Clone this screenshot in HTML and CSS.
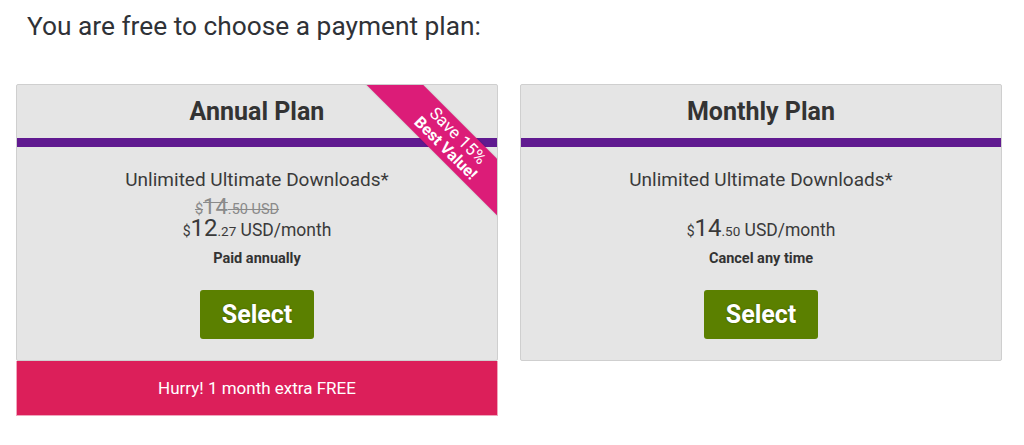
FILE: index.html
```html
<!DOCTYPE html>
<html lang="en">
<head>
<meta charset="utf-8">
<title>Payment plans</title>
<link rel="stylesheet" href="styles.css">
</head>
<body>
<h1 class="intro">You are free to choose a payment plan:</h1>
<div class="plans">
  <div class="plan-col">
    <div class="card">
      <div class="card-head">Annual Plan</div>
      <div class="card-body">
        <div class="feature">Unlimited Ultimate Downloads*</div>
        <div class="old-price"><span class="cur">$</span><span class="big">14</span>.50 USD</div>
        <div class="price"><span class="cur">$</span><span class="big">12</span><span class="cents">.27</span> USD/month</div>
        <div class="note">Paid annually</div>
        <a class="btn" href="#">Select</a>
      </div>
      <div class="ribbon"><span>Save 15%</span><b>Best Value!</b></div>
    </div>
    <div class="promo">Hurry! 1 month extra FREE</div>
  </div>
  <div class="plan-col">
    <div class="card">
      <div class="card-head">Monthly Plan</div>
      <div class="card-body">
        <div class="feature">Unlimited Ultimate Downloads*</div>
        <div class="old-price hidden">&nbsp;</div>
        <div class="price"><span class="cur">$</span><span class="big">14</span><span class="cents">.50</span> USD/month</div>
        <div class="note">Cancel any time</div>
        <a class="btn" href="#">Select</a>
      </div>
    </div>
  </div>
</div>
</body>
</html>
```
FILE: styles.css
```css
* { box-sizing: border-box; }
html, body { margin: 0; padding: 0; background: #fff; }
body {
  font-family: Roboto, "Liberation Sans", Arial, sans-serif;
  color: #333;
}
.intro {
  margin: 0;
  padding: 11px 0 0 27px;
  font-size: 26.3px;
  line-height: 30px;
  font-weight: 400;
  color: #2f3237;
}
.plans {
  display: flex;
  gap: 22px;
  padding: 43px 0 0 16px;
}
.plan-col { width: 482px; }
.card {
  position: relative;
  overflow: hidden;
  background: #e5e5e5;
  border: 1px solid #cfcfcf;
  border-radius: 2px;
}
.card-head {
  height: 62px;
  display: flex;
  align-items: center;
  justify-content: center;
  font-size: 25px;
  font-weight: 700;
  color: #333;
  border-bottom: 9px solid #601a90;
}
.card-body {
  display: flex;
  flex-direction: column;
  align-items: center;
  padding: 22px 0 21px;
}
.feature {
  font-size: 19px;
  line-height: 22px;
  color: #3a3a3a;
}
.old-price {
  margin-top: 6px;
  margin-right: 40px;
  height: 20px;
  line-height: 20px;
  font-size: 14.5px;
  color: #8a8a8a;
  text-decoration: line-through;
}
.old-price .big { font-size: 22px; }
.old-price.hidden { visibility: hidden; }
.price {
  height: 22px;
  line-height: 22px;
  font-size: 17.5px;
  color: #3a3a3a;
}
.price .cur { font-size: 14px; }
.price .big { font-size: 24px; }
.price .cents { font-size: 13.5px; }
.note {
  margin-top: 11px;
  font-size: 14.5px;
  line-height: 18px;
  font-weight: 700;
  color: #333;
}
.btn {
  margin-top: 22px;
  width: 114px;
  height: 49px;
  display: flex;
  align-items: center;
  justify-content: center;
  background: #5b8000;
  border-radius: 3px;
  color: #fff;
  font-size: 25px;
  font-weight: 700;
  text-decoration: none;
  text-shadow: 0 0 2px rgba(0,0,0,0.35);
}
.ribbon {
  position: absolute;
  left: 332px;
  top: 34px;
  width: 200px;
  height: 40px;
  padding-left: 8px;
  transform: rotate(45deg);
  background: #dc1c78;
  color: #fff;
  display: flex;
  flex-direction: column;
  align-items: center;
  justify-content: center;
  line-height: 18px;
  box-shadow: 0 0 2px rgba(0,0,0,0.2);
}
.ribbon span { font-size: 17px; }
.ribbon b { font-weight: 700; font-size: 16px; }
.promo {
  height: 55px;
  display: flex;
  align-items: center;
  justify-content: center;
  background: #dc1f5a;
  color: #fff;
  font-size: 17px;
  border: 1px solid #f0a6bd;
  border-top: none;
}
```
